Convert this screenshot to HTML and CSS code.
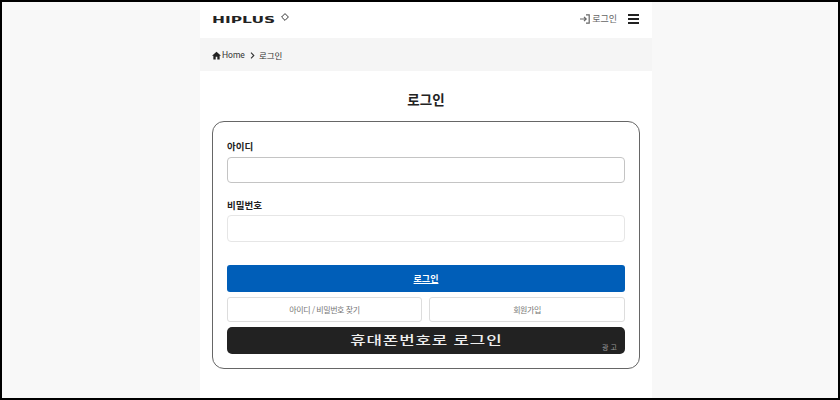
FILE: index.html
```html
<!DOCTYPE html>
<html lang="ko">
<head>
<meta charset="utf-8">
<title>로그인</title>
<link rel="stylesheet" href="styles.css">
</head>
<body>
<div class="frame">
  <div class="column">
    <header class="header">
      <a class="logo"><span class="logo-text">HIPLUS</span>
        <svg class="logo-mark" width="8" height="8" viewBox="0 0 8 8"><path d="M4 .6 7.400 4 4 7.400 .6 4Z" fill="none" stroke="#333" stroke-width="1"/><path d="M4 2.600 5.400 4 4 5.400 2.600 4Z" fill="#fff"/></svg>
      </a>
      <div class="header-right">
        <a class="login-link">
          <svg width="10" height="10" viewBox="0 0 10 10" fill="none" stroke="#666" stroke-width="1.2"><path d="M0 5h6M4 2.800 6.200 5 4 7.200"/><path d="M6 .8h3.200v8.400H6"/></svg>
          <span>로그인</span>
        </a>
        <svg class="menu" width="11" height="10" viewBox="0 0 11 10" fill="#222"><rect width="11" height="2"/><rect y="4" width="11" height="2"/><rect y="8" width="11" height="2"/></svg>
      </div>
    </header>
    <nav class="crumbs">
      <svg width="9" height="9" viewBox="0 0 10 10" fill="#222"><path d="M5 .8 0 5.400h1.500V9.500h2.600V6.500h1.800v3h2.600V5.400H10Z"/></svg>
      <span class="crumb-home">Home</span>
      <svg class="crumb-sep" width="5" height="7" viewBox="0 0 5 7" fill="none" stroke="#333" stroke-width="1.1"><path d="M1 .7 3.800 3.500 1 6.300"/></svg>
      <span>로그인</span>
    </nav>
    <main class="main">
      <h1 class="title">로그인</h1>
      <form class="card">
        <label class="label">아이디</label>
        <div class="input input-focus"></div>
        <label class="label label-second">비밀번호</label>
        <div class="input"></div>
        <div class="btn-primary">로그인</div>
        <div class="btn-row">
          <div class="btn-outline btn-find">아이디 / 비밀번호 찾기</div>
          <div class="btn-outline btn-join">회원가입</div>
        </div>
        <div class="btn-dark">
          <span class="btn-dark-text">휴대폰번호로 로그인</span>
          <span class="ad">광고</span>
        </div>
      </form>
    </main>
  </div>
</div>
</body>
</html>
```
FILE: styles.css
```css
* { box-sizing: border-box; }
html, body { margin: 0; height: 100%; }
body { font-family: "Noto Sans CJK KR", "Noto Sans", sans-serif; color: #222; }
.frame { width: 840px; height: 400px; border: 2px solid #000; background: #f8f8f8; overflow: hidden; padding-left: 198px; }
.column { width: 452px; height: 396px; background: #fff; }
.header { height: 36px; display: flex; align-items: center; justify-content: space-between; padding: 0 13px 3px 12px; }
.logo { display: flex; align-items: flex-start; }
.logo-text { font: bold 9.500px/10px "DejaVu Sans", sans-serif; display: inline-block; transform: scaleX(1.63); transform-origin: left center; width: 69px; color: #222; margin-top: 2px; }
.logo-mark { margin-top: 0; }
.header-right { display: flex; align-items: center; gap: 11px; }
.login-link { display: flex; align-items: center; gap: 2px; font-size: 9px; color: #666; }
.crumbs { height: 33px; background: #f5f5f5; display: flex; align-items: center; padding: 1px 12px 0; font-size: 8.500px; color: #333; }
.crumb-home { margin-left: 1px; font-family: "Roboto", sans-serif; font-size: 8.500px; }
.crumb-sep { margin: 1px 4px 0 5px; }
.main { padding: 0 12px; }
.title { margin: 17px 0 0; height: 22px; font-size: 13.500px; line-height: 22px; font-weight: 700; text-align: center; color: #222; }
.card { margin-top: 11px; height: 248px; border: 1px solid #666; border-radius: 12px; padding: 17px 14px 0; }
.label { display: block; height: 18px; font-size: 9.500px; line-height: 14px; font-weight: 700; color: #222; }
.label-second { margin-top: 13px; height: 19px; line-height: 19px; }
.input { height: 27px; border: 1px solid #e6e6e6; border-radius: 4px; background: #fff; }
.input-focus { height: 26px; border: 1.500px solid #c4c4c4; }
.btn-primary { margin-top: 23px; height: 27px; background: #005eb8; color: #fff; border-radius: 3px; font-size: 9px; font-weight: 700; display: flex; align-items: center; justify-content: center; text-decoration: underline; }
.btn-row { display: flex; gap: 7px; margin-top: 5px; }
.btn-outline { height: 25px; border: 1px solid #ddd; border-radius: 3px; color: #777; font-size: 8px; letter-spacing: -.45px; display: flex; align-items: center; justify-content: center; }
.btn-find { flex: 0 0 195px; }
.btn-join { flex: 1 1 0; }
.btn-dark { position: relative; margin-top: 5px; height: 27px; background: #222; border-radius: 5px; display: flex; align-items: center; justify-content: center; color: #eee; }
.btn-dark-text { display: inline-block; font-size: 12px; line-height: 14px; font-weight: 500; letter-spacing: .6px; transform: scaleX(1.4); margin-top: -2px; }
.ad { position: absolute; right: 6px; bottom: 3px; font-size: 7px; line-height: 8px; letter-spacing: 2px; color: #999; }
```
